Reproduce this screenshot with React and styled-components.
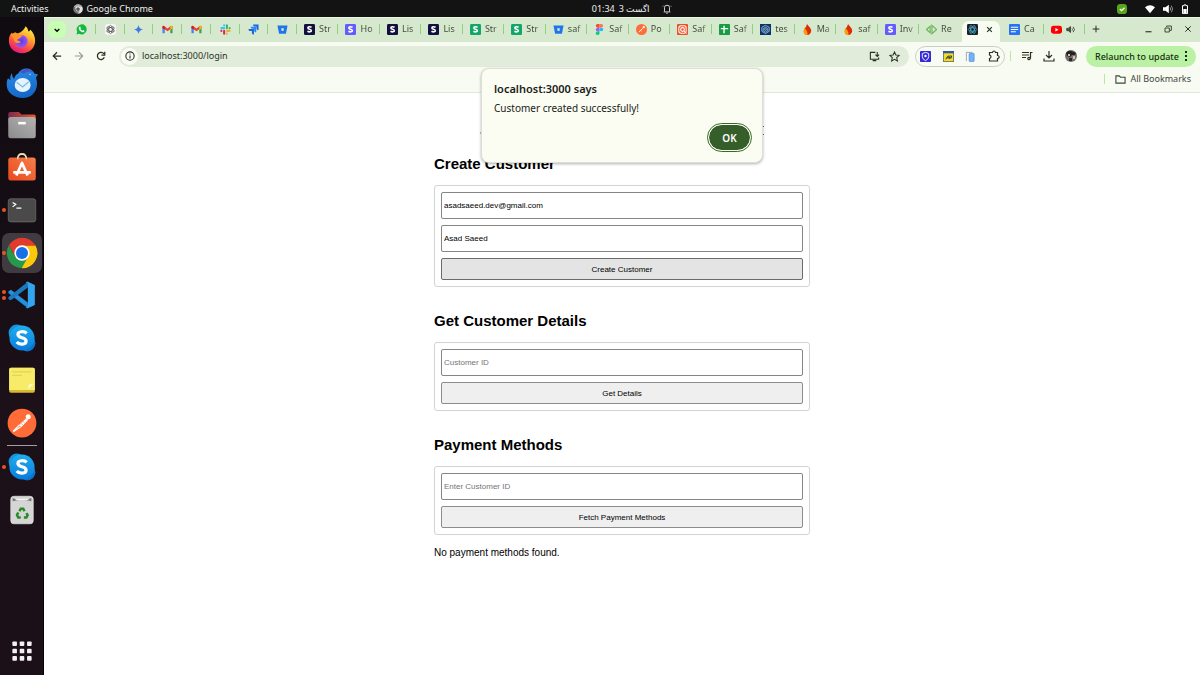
import React from "react";
import styled, { createGlobalStyle } from "styled-components";

const Global = createGlobalStyle`
  *, *::before, *::after { box-sizing: border-box; }
  html, body { margin: 0; height: 100%; }
  #root { height: 100%; }
  body { background: #fff; overflow: hidden; font-family: "Noto Sans", "Open Sans", sans-serif; }
  button, input { font-family: inherit; margin: 0; }
  svg { display: block; flex: none; }
`;

const Desktop = styled.div`
  display: flex;
  flex-direction: column;
  min-height: 100%;
`;

/* ---------- system bar ---------- */
const SystemBar = styled.header`
  display: grid;
  grid-template-columns: 1fr auto 1fr;
  align-items: center;
  height: 17px;
  padding: 0 11px;
  background: #131313;
  color: #f0f0f0;
  font-size: 9px;
  line-height: 17px;
`;
const BarGroup = styled.div`
  display: flex;
  align-items: center;
  justify-content: ${(p) => p.$justify || "flex-start"};
  gap: ${(p) => p.$gap}px;
`;
const ClockGroup = styled(BarGroup)`
  padding-left: 64px;
`;
const BarButton = styled.button`
  display: flex;
  align-items: center;
  gap: 4px;
  padding: 0;
  border: 0;
  background: none;
  color: inherit;
  font-size: 9px;
  line-height: 17px;
`;

const Workspace = styled.div`
  display: flex;
  flex: 1;
`;

/* ---------- dock ---------- */
const Dock = styled.nav`
  display: flex;
  flex-direction: column;
  align-items: center;
  width: 44px;
  flex: none;
  padding: 3px 0 4px;
  background: linear-gradient(#0f0b10, #1c1019 60%, #1b1017);
  border-right: 1px solid #050305;
`;
const Favourites = styled.div`
  display: flex;
  flex-direction: column;
  justify-content: space-between;
  height: 423px;
`;
const OpenItems = styled.div`
  display: flex;
  flex-direction: column;
  gap: 3px;
`;
const DockItem = styled.button`
  position: relative;
  display: flex;
  align-items: center;
  justify-content: center;
  width: 40px;
  height: 40px;
  padding: 0;
  border: 0;
  border-radius: 7px;
  background: ${(p) => (p.$active ? "#3f3b40" : "transparent")};
`;
const RunDots = styled.span`
  position: absolute;
  left: 0;
  top: 0;
  bottom: 0;
  display: flex;
  flex-direction: column;
  justify-content: center;
  gap: 2px;
  i { width: 4px; height: 4px; border-radius: 2px; background: #e95420; }
`;
const DockRule = styled.hr`
  width: 30px;
  height: 1px;
  margin: 2px 0 1px;
  border: 0;
  background: #a29ea2;
`;
const DockSpace = styled.div`flex: 1;`;

/* ---------- browser ---------- */
const Browser = styled.main`
  position: relative;
  display: flex;
  flex-direction: column;
  flex: 1;
  min-width: 0;
  background: #fff;
`;
const TabStrip = styled.div`
  display: flex;
  align-items: stretch;
  height: 25px;
  padding-left: 4px;
  background: #d6e8cd;
  border-top: 1px solid #e9f4e3;
`;
const TabSearch = styled.button`
  display: grid;
  place-items: center;
  width: 18px;
  height: 17px;
  margin: 3px 1px 0 0;
  padding: 0;
  border: 0;
  border-radius: 6px;
  background: #c8ffb4;
`;
const PinnedTabs = styled.div`
  display: flex;
  width: 230px;
  flex: none;
`;
const TitledTabs = styled.div`
  display: grid;
  grid-auto-flow: column;
  grid-auto-columns: minmax(0, 1fr);
  flex: 1;
  min-width: 0;
`;
const Tab = styled.button`
  position: relative;
  display: flex;
  flex: 1;
  align-items: center;
  justify-content: ${(p) => (p.$pinned ? "center" : "flex-start")};
  gap: 4px;
  min-width: 0;
  padding: ${(p) => (p.$pinned ? "0 0 2px" : "0 4px 2px 7px")};
  border: 0;
  background: none;
  color: #44503f;
  font-size: 9px;
  line-height: 12px;
  &::after {
    content: "";
    position: absolute;
    right: 0;
    top: 6px;
    height: 10px;
    width: 1px;
    background: ${(p) => (p.$noRule ? "transparent" : "#8bd47c")};
  }
`;
const ActiveTab = styled.div`
  display: flex;
  align-items: center;
  justify-content: space-between;
  min-width: 0;
  margin: 3px 2px 0 1px;
  padding: 0 7px 4px 5px;
  border-radius: 7px 7px 0 0;
  background: #f8fbf1;
`;
const TabTitle = styled.span`
  flex: 1;
  min-width: 0;
  overflow: hidden;
  white-space: nowrap;
  text-align: left;
  mask-image: linear-gradient(90deg, #000 60%, rgba(0, 0, 0, 0.2));
`;
const StripEnd = styled.div`
  display: flex;
  align-items: center;
  justify-content: space-between;
  width: 115px;
  flex: none;
  padding: 0 7px 2px 6px;
`;
const WindowButtons = styled.div`
  display: flex;
  gap: 10px;
`;
const IconButton = styled.button`
  display: grid;
  place-items: center;
  flex: none;
  width: ${(p) => p.$size || 10}px;
  height: ${(p) => p.$size || 10}px;
  padding: 0;
  border: 0;
  background: none;
  color: ${(p) => (p.$dim ? "#95a08f" : "#27331f")};
`;
const Toolbar = styled.div`
  display: flex;
  align-items: center;
  height: 28px;
  padding: 0 4px 0 8px;
  background: #f8fbf1;
`;
const NavButtons = styled.div`
  display: flex;
  gap: 12px;
  margin-right: 13px;
`;
const AddressBar = styled.label`
  display: flex;
  align-items: center;
  flex: 1;
  gap: 4px;
  height: 21px;
  padding: 0 9px 0 2px;
  border-radius: 11px;
  background: #e2ecdb;
  color: #27331f;
`;
const SiteInfo = styled.span`
  display: grid;
  place-items: center;
  width: 17px;
  height: 17px;
  border-radius: 9px;
  background: #fafdf6;
`;
const AddressInput = styled.input`
  flex: 1;
  min-width: 0;
  padding: 0;
  border: 0;
  outline: 0;
  background: none;
  color: #2a3327;
  font-size: 9px;
  line-height: 14px;
`;
const AddressActions = styled.span`
  display: flex;
  gap: 9px;
`;
const Extensions = styled.div`
  display: flex;
  align-items: center;
  justify-content: space-between;
  width: 90px;
  height: 21px;
  margin: 0 5px 0 6px;
  padding: 0 4px;
  border: 1px solid #c9cec4;
  border-radius: 11px;
  color: #27331f;
`;
const Rule = styled.span`
  width: 1px;
  height: 10px;
  background: #b4e8a3;
`;
const ToolGroup = styled.div`
  display: flex;
  gap: 10px;
  margin: 0 9px 0 10px;
`;
const Relaunch = styled.button`
  display: flex;
  align-items: center;
  justify-content: space-between;
  width: 110px;
  height: 21px;
  padding: 0 9px;
  border: 0;
  border-radius: 11px;
  background: #baf1a5;
  color: #15300c;
  font-size: 9px;
  font-weight: 500;
  white-space: nowrap;
`;
const Bookmarks = styled.div`
  display: flex;
  align-items: center;
  justify-content: flex-end;
  gap: 10px;
  height: 23px;
  padding: 0 9px 4px 0;
  background: #f8fbf1;
  border-bottom: 1px solid #e2e6dd;
`;
const BookmarkButton = styled.button`
  display: flex;
  align-items: center;
  gap: 4px;
  padding: 0;
  border: 0;
  background: none;
  color: #3c463a;
  font-size: 9px;
  line-height: 14px;
`;

/* ---------- page ---------- */
const Page = styled.div`
  display: flex;
  flex-direction: column;
  width: 100%;
  max-width: 376px;
  margin: 0 auto;
  padding-top: 33px;
  color: #000;
  font-family: "Liberation Sans", Arial, sans-serif;
  font-size: 10px;
`;
const Banner = styled.svg`
  align-self: center;
  margin-bottom: 18px;
`;
const Heading = styled.h2`
  margin: 0 0 11px;
  font-size: 15px;
  line-height: 20px;
`;
const Form = styled.form`
  display: flex;
  flex-direction: column;
  gap: 6px;
  margin-bottom: ${(p) => (p.$last ? 12 : 24)}px;
  padding: 6px;
  border: 1px solid #d3d3d3;
  border-radius: 3px;
`;
const Field = styled.input`
  width: 100%;
  height: 27px;
  padding: 0 2px;
  border: 1px solid #858585;
  border-radius: 2px;
  background: #fff;
  color: #000;
  font-size: 8px;
  &::placeholder { color: #757575; opacity: 1; }
`;
const Submit = styled.button`
  height: 22px;
  padding: 0;
  border: 1px solid ${(p) => (p.$hovered ? "#6b6b6b" : "#8c8c8c")};
  border-radius: 2px;
  background: ${(p) => (p.$hovered ? "#e4e4e4" : "#efefef")};
  color: #000;
  font-size: 8px;
`;
const Message = styled.p`
  margin: 0;
  font-size: 10px;
  line-height: 12px;
`;

/* ---------- alert ---------- */
const Alert = styled.section`
  position: absolute;
  top: 51px;
  left: 50%;
  display: flex;
  flex-direction: column;
  width: 282px;
  height: 95px;
  margin-left: -141px;
  padding: 12px 11px 11px 12px;
  border: 1px solid #dcdfd7;
  border-radius: 8px;
  background: #fbfdf3;
  box-shadow: 0 1px 3px rgba(0, 0, 0, 0.3);
  color: #1a1c18;
`;
const AlertTitle = styled.h1`
  margin: 0 0 5px;
  font-size: 11px;
  font-weight: 600;
  line-height: 15px;
`;
const AlertText = styled.p`
  margin: 0;
  font-size: 10px;
  line-height: 15px;
`;
const OkButton = styled.button`
  align-self: flex-end;
  width: 43px;
  height: 27px;
  margin: auto 0 0;
  padding: 0;
  border: 1px solid #fbfdf3;
  border-radius: 14px;
  outline: 1px solid #386a20;
  background: #355e2b;
  background-clip: padding-box;
  color: #fff;
  font-size: 10px;
  font-weight: 600;
`;

/* ---------- line icons ---------- */
const Line = ({ d, size = 10, w = 1.3, children }) => (
  <svg width={size} height={size} viewBox="0 0 12 12" fill="none" stroke="currentColor" strokeWidth={w}>
    {d && <path d={d} />}
    {children}
  </svg>
);

/* ---------- favicons ---------- */
const Fav = ({ children }) => (
  <svg width="11" height="11" viewBox="0 0 24 24">{children}</svg>
);
const StripeIcon = ({ color }) => (
  <Fav>
    <rect width="24" height="24" rx="3" fill={color} />
    <path d="M16.500 7c-3-1.500-8-1.500-8 1.500 0 3.500 7.500 2.500 7.500 6 0 3-5 3.200-8.500 1.500" fill="none" stroke="#fff" strokeWidth="3.600" />
  </Fav>
);
const favicons = {
  whatsapp: <Fav><path d="M1 23l1.700-6A11 11 0 1 1 7 21.300z" fill="#12b93d" /><path d="M7 6l2-.5 1.700 3.500-1.200 1.700c1 2 2.300 3 4.200 3.800l1.500-1.500 3.300 1.700c0 3-3 4-5.500 3C9 16 6.500 13 6 10c-.2-1.500 0-3 1-4z" fill="#fff" /></Fav>,
  gpt: <Fav><rect width="24" height="24" rx="5" fill="#f5f5f5" /><g fill="none" stroke="#555" strokeWidth="1.700"><ellipse cx="12" cy="12" rx="4" ry="9" /><ellipse cx="12" cy="12" rx="4" ry="9" transform="rotate(60 12 12)" /><ellipse cx="12" cy="12" rx="4" ry="9" transform="rotate(120 12 12)" /></g></Fav>,
  gemini: <Fav><path d="M12 2c1 6 4 9 10 10-6 1-9 4-10 10-1-6-4-9-10-10 6-1 9-4 10-10z" fill="#3c7be0" /></Fav>,
  gmail: <Fav><path d="M1 6v14h5V11z" fill="#4285f4" /><path d="M23 6v14h-5V11z" fill="#34a853" /><path d="M1 8V5l3-1 8 6 8-6 3 1v3l-11 8z" fill="#ea4335" /><path d="M18 6l3-2 2 2v3l-5 4z" fill="#fbbc04" /><path d="M1 6l2-2 3 2v6L1 9z" fill="#c5221f" /></Fav>,
  slack: <Fav><g strokeWidth="4.400" strokeLinecap="round"><path d="M3 9h6" stroke="#36c5f0" /><path d="M9 3v0" stroke="#36c5f0" /><path d="M15 3v6" stroke="#2eb67d" /><path d="M21 9v0" stroke="#2eb67d" /><path d="M15 15h6" stroke="#ecb22e" /><path d="M15 21v0" stroke="#ecb22e" /><path d="M9 15v6" stroke="#e01e5a" /><path d="M3 15v0" stroke="#e01e5a" /></g></Fav>,
  jira: <Fav><path d="M11 1h12v12c-3 0-4.500-2-4.500-4V5.500H15c-2.500 0-4-2-4-4.500z" fill="#1868db" /><path d="M6 6h12v12c-3 0-4.500-2-4.500-4v-3.500H10C7.500 10.500 6 8.500 6 6z" fill="#2684ff" /><path d="M1 11h12v12c-3 0-4.500-2-4.500-4v-3.500H5c-2.500 0-4-2-4-4.500z" fill="#1868db" /></Fav>,
  bitbucket: <Fav><path d="M1 3h22l-3.500 18h-15zM9 9l1.200 6h4L15 9z" fill="#1f75ee" fillRule="evenodd" /></Fav>,
  navy: <StripeIcon color="#11103f" />,
  violet: <StripeIcon color="#635bff" />,
  green: <StripeIcon color="#12a66a" />,
  figma: <Fav><path d="M12 0H8a4 4 0 0 0 0 8h4z" fill="#f24e1e" /><path d="M12 0h4a4 4 0 0 1 0 8h-4z" fill="#ff7262" /><path d="M12 8H8a4 4 0 0 0 0 8h4z" fill="#a259ff" /><circle cx="16" cy="12" r="4" fill="#1abcfe" /><path d="M12 16H8a4 4 0 1 0 4 4z" fill="#0acf83" /></Fav>,
  postman: <Fav><circle cx="12" cy="12" r="12" fill="#ff6c37" /><path d="M6 18l9-9M9 13l3 3" stroke="#fff" strokeWidth="2" /><circle cx="17" cy="7" r="2.500" fill="#fff" /></Fav>,
  camera: <Fav><rect width="24" height="24" rx="2" fill="#ee5026" /><rect x="4" y="4" width="16" height="16" rx="5" fill="none" stroke="#fff" strokeWidth="2.200" /><circle cx="12" cy="12" r="4" fill="none" stroke="#fff" strokeWidth="2.500" /><path d="M15 15l6 6" stroke="#fff" strokeWidth="2" /></Fav>,
  sheets: <Fav><rect width="24" height="24" rx="2" fill="#179b45" /><path d="M4 10h16M11 4v16" stroke="#fff" strokeWidth="3" /></Fav>,
  swirl: <Fav><rect width="24" height="24" fill="#0b3569" /><g fill="none" stroke="#a8c7e6" strokeWidth="1.700"><path d="M12 3l8 4v9l-8 5-8-5V7z" /><path d="M12 7l5 3v5l-5 3-5-3v-5z" /><circle cx="12" cy="12" r="2" /></g></Fav>,
  flame: <Fav><path d="M11 0c2 5 10 8 9 16-1 5-4 8-8 8-5 0-9-4-8-10 .6-4 5-6 7-14z" fill="#dd2c00" /><path d="M6 8c2 5 7 7 6 16-5 0-9-4-8-10 .2-2 1-4 2-6z" fill="#ffa000" /></Fav>,
  code: <Fav><g fill="none" stroke="#6fb65e" strokeWidth="2.600"><path d="M9 5l-8 7 8 7z" /><path d="M13 3l10 9-10 9z" /></g></Fav>,
  react: <Fav><rect width="24" height="24" rx="3" fill="#1b1f27" /><g fill="none" stroke="#4aa9c6" strokeWidth="1.700"><ellipse cx="12" cy="12" rx="9.500" ry="3.800" /><ellipse cx="12" cy="12" rx="9.500" ry="3.800" transform="rotate(60 12 12)" /><ellipse cx="12" cy="12" rx="9.500" ry="3.800" transform="rotate(120 12 12)" /></g></Fav>,
  docs: <Fav><rect width="24" height="24" rx="2" fill="#2874f0" /><path d="M4 7h16M4 12h16M4 17h11" stroke="#fff" strokeWidth="2.500" /></Fav>,
  youtube: <Fav><rect y="4" width="24" height="17" rx="5" fill="#f00" /><path d="M9.500 8.500v8l7-4z" fill="#fff" /></Fav>,
};
const sound = (
  <Line size={9}><path d="M1 4.500v3h2L6 10V2L3 4.500z" fill="currentColor" /><path d="M8 4.500q1.500 1.500 0 3M9.500 2.500q3.500 3.500 0 7" /></Line>
);

const pinned = ["whatsapp", "gpt", "gemini", "gmail", "gmail", "slack", "jira", "bitbucket"];
const tabs = [
  ["navy", "Str"], ["violet", "Ho"], ["navy", "Lis"], ["navy", "Lis"], ["green", "Str"],
  ["green", "Str"], ["bitbucket", "saf"], ["figma", "Saf"], ["postman", "Po"], ["camera", "Saf"],
  ["sheets", "Saf"], ["swirl", "tes"], ["flame", "Ma"], ["flame", "saf"], ["violet", "Inv"], ["code", "Re"],
];

/* ---------- dock icons ---------- */
const Big = ({ children, size = 30 }) => (
  <svg width={size} height={size} viewBox="0 0 48 48">{children}</svg>
);
const Firefox = () => (
  <Big>
    <defs>
      <linearGradient id="fx" x1="0.800" y1="0" x2="0.300" y2="1"><stop offset="0" stopColor="#fff44f" /><stop offset=".35" stopColor="#ffb02b" /><stop offset=".7" stopColor="#ff4f3f" /><stop offset="1" stopColor="#e31587" /></linearGradient>
      <radialGradient id="fxg"><stop offset="0" stopColor="#6a35d9" /><stop offset="1" stopColor="#9059ff" /></radialGradient>
    </defs>
    <path d="M30 2c3 3 4 6 4 8 2 0 3-1 3-3 5 4 8 11 8 18 0 12-9 20-21 20S3 37 3 25c0-6 2-10 5-13v4l5-5c1 2 3 2 5 2 5-1 9-5 12-11z" fill="url(#fx)" />
    <circle cx="23" cy="26" r="10" fill="url(#fxg)" />
    <path d="M7 14c5-2 10 0 12 2 3-1 5 0 6 2-2 0-3 1-4 3-2 0-4 1-5 3 2 2 4 1 6 3-4 4-11 1-11-4-2-3-4-5-4-9z" fill="#ff9526" />
  </Big>
);
const Thunderbird = () => (
  <Big size={32}>
    <defs><linearGradient id="tb" x1="0.300" y1="0" x2="0.600" y2="1"><stop offset="0" stopColor="#2a8de8" /><stop offset="1" stopColor="#1464c4" /></linearGradient></defs>
    <path d="M9 9c-3 4-3 8-2 11l-4-3c-3 6-3 16 3 22 9 9 25 10 33 3 8-7 9-17 6-26l3-5-5-1C38-1 23 0 18 10c-3 1-5 4-6 8-2-2-3-5-3-9z" fill="url(#tb)" />
    <path d="M21 8c5-6 15-7 20 0-5-2-9-1-12 1-3 1-5 1-8-1z" fill="#4b52c4" />
    <ellipse cx="25" cy="27" rx="12" ry="10.500" fill="#e6f4ff" />
    <path d="M16 23l9 7 9-8" fill="none" stroke="#7db9ef" strokeWidth="2" />
    <circle cx="36" cy="11" r="1" fill="#fff" />
  </Big>
);
const Files = () => (
  <Big>
    <defs><linearGradient id="fi" x1="0" x2="1"><stop offset="0" stopColor="#7b2a4c" /><stop offset="1" stopColor="#e95a2a" /></linearGradient><linearGradient id="fg" x1="0" y1="1" x2="1" y2="0"><stop offset="0" stopColor="#8b8b8b" /><stop offset="1" stopColor="#b3b3b3" /></linearGradient></defs>
    <path d="M2 6q0-3 3-3h14l4 4h20q3 0 3 3v12H2z" fill="url(#fi)" />
    <rect x="2" y="11" width="44" height="34" rx="4" fill="url(#fg)" />
    <path d="M18 21h12" stroke="#fff" strokeWidth="4" />
  </Big>
);
const Software = () => (
  <Big>
    <defs><linearGradient id="sw" x1="0" y1="1" x2="1" y2="0"><stop offset="0" stopColor="#e8481c" /><stop offset="1" stopColor="#f77f4b" /></linearGradient></defs>
    <path d="M17 11q0-10 7-10t7 10" fill="none" stroke="#dcc9a0" strokeWidth="2.500" />
    <rect x="2" y="7" width="44" height="37" rx="4" fill="url(#sw)" />
    <path d="M17 10q0-8 7-8t7 8" fill="none" stroke="#eadfbf" strokeWidth="2" />
    <path d="M15 36l9-20 9 20M10 31h28" fill="none" stroke="#fff" strokeWidth="4.500" strokeLinejoin="round" />
  </Big>
);
const Terminal = () => (
  <Big>
    <rect x="2" y="6" width="44" height="37" rx="4" fill="#4a4a4a" stroke="#777" />
    <path d="M9 12l5 3-5 4M15 21h8" fill="none" stroke="#fff" strokeWidth="2" />
  </Big>
);
const Chrome = ({ size = 32, mono }) => {
  const [r, y, g, b] = mono ? ["#aaa", "#ddd", "#777", "#555"] : ["#e23b2e", "#fdc70c", "#28984a", "#1a6fe8"];
  return (
    <Big size={size}>
      <path d="M24 24L4.400 12.500A23 23 0 0 1 43.600 12z" fill={r} />
      <path d="M24 24V12.500h20A23 23 0 0 1 24 47z" fill={y} />
      <path d="M24 24l9 6-9.500 17A23 23 0 0 1 4.300 12.500L14 30z" fill={g} />
      <path d="M24 13h20a23 23 0 0 0-39.500-.5L14 29z" fill={r} />
      <circle cx="24" cy="24" r="11.500" fill="#fff" />
      <circle cx="24" cy="24" r="9" fill={b} />
    </Big>
  );
};
const Code = () => (
  <Big size={28}>
    <path d="M33 2L8 29l-5 4-2-3v-2L33 2z" fill="#1b7bc4" />
    <path d="M33 46L8 19l-4-3-3 2v3l32 25z" fill="#1b83cf" />
    <path d="M33 1l13 6v34l-13 6-2-1 3-8V11l-3-9z" fill="#32a5ee" />
    <path d="M5 15l29 22v9L1 20v-2z" fill="#2490dc" />
    <path d="M5 33l29-22V2L1 28v2z" fill="#1c78bd" />
  </Big>
);
const Skype = () => (
  <Big size={28}>
    <defs><linearGradient id="sk" x1="0" y1="0" x2="0" y2="1"><stop offset="0" stopColor="#20aef0" /><stop offset="1" stopColor="#087ddb" /></linearGradient></defs>
    <circle cx="15" cy="15" r="14" fill="#1793dc" /><circle cx="33" cy="33" r="14" fill="#0c74cc" />
    <circle cx="24" cy="24" r="21.500" fill="url(#sk)" />
    <path d="M32 16c-4-4-15-4-15 2 0 7 14 4 14 11 0 7-12 7-16 2" fill="none" stroke="#fff" strokeWidth="5.500" />
  </Big>
);
const Notes = () => (
  <Big size={28}>
    <rect x="2" y="3" width="44" height="43" rx="3" fill="#d9b92d" />
    <path d="M2 6q0-3 3-3h38q3 0 3 3v35H2z" fill="#f7ec6a" />
    <path d="M7 10h33M7 16h17" stroke="#e5d44e" strokeWidth="2" /><path d="M34 40l2-8 8-2z" fill="#fffbd0" />
  </Big>
);
const Postman = () => (
  <Big>
    <circle cx="24" cy="24" r="23" fill="#ff6c37" />
    <circle cx="34" cy="14" r="4" fill="#fff" />
    <path d="M31 17L20 27l3 3 10-11z" fill="#fff" stroke="#fff" strokeWidth="1.500" />
    <path d="M20 27L10 37M22 30L10 38" stroke="#fff" strokeWidth="2" />
    <path d="M25 21l4 4M22 24l4 4" stroke="#ff6c37" />
  </Big>
);
const Trash = () => (
  <Big>
    <rect x="6" y="2" width="36" height="44" rx="5" fill="#d5d5d5" stroke="#eee" />
    <path d="M9 5h30v5q-15-5-30 0z" fill="#777" /><path d="M11 5h26l-4 3H15z" fill="#f5f5f5" />
    <g fill="none" stroke="#268c24" strokeWidth="4"><path d="M20 26l2-4h4l2 4" /><path d="M31 29l2 3-2 4h-4" /><path d="M22 36h-4l-2-4 2-4" /></g>
  </Big>
);
const Grid = () => (
  <Big size={22}>
    {[3, 19, 35].map((y) => [3, 19, 35].map((x) => <rect key={x + "-" + y} x={x} y={y} width="10" height="10" rx="2" fill="#f2f0f2" />))}
  </Big>
);

const dock = [
  ["Firefox", Firefox, 0], ["Thunderbird", Thunderbird, 0], ["Files", Files, 0], ["Software", Software, 0],
  ["Terminal", Terminal, 1], ["Chrome", Chrome, 1, true], ["Code", Code, 2], ["Skype", Skype, 0],
  ["Notes", Notes, 0], ["Postman", Postman, 0],
];

const DockEntry = ({ name, Icon, dots = 0, active }) => (
  <DockItem type="button" aria-label={name} $active={active}>
    {dots > 0 && <RunDots>{Array.from({ length: dots }, (_, i) => <i key={i} />)}</RunDots>}
    <Icon />
  </DockItem>
);

export default function App() {
  return (
    <Desktop>
      <Global />
      <SystemBar>
        <BarGroup $gap={24}>
          <BarButton type="button">Activities</BarButton>
          <BarButton type="button"><Chrome size={10} mono />Google Chrome</BarButton>
        </BarGroup>
        <ClockGroup $gap={12}>
          <BarButton type="button"><span>01:34</span><span>3 اگست</span></BarButton>
          <Line size={10} w={1}><path d="M2 9.500h8M3 9V4q0-2.500 3-2.500T9 4v5M5 11h2M1 3l1-1M11 3l-1-1" /></Line>
        </ClockGroup>
        <BarGroup $gap={8} $justify="flex-end">
          <BarGroup $gap={18}>
            <svg width="10" height="10" viewBox="0 0 12 12"><rect width="12" height="12" rx="4" fill="#5aa51a" /><path d="M3.500 6l2 2 3.500-3.500" fill="none" stroke="#fff" strokeWidth="1.500" /></svg>
            <svg width="10" height="10" viewBox="0 0 12 12"><path d="M0 4q6-5 12 0L6 11z" fill="#fff" /></svg>
          </BarGroup>
          <svg width="10" height="10" viewBox="0 0 12 12"><path d="M0 4h3l4-3v10L3 8H0z" fill="#fff" /><path d="M8.500 4q1.500 2 0 4M10 2q3 4 0 8" fill="none" stroke="#aaa" /></svg>
          <svg width="8" height="10" viewBox="0 0 8 12"><path d="M1 2h2V1h2v1h2v9.500H1z" fill="none" stroke="#fff" strokeWidth="1.200" /><path d="M2 6h4v5H2z" fill="#fff" /></svg>
        </BarGroup>
      </SystemBar>
      <Workspace>
        <Dock>
          <Favourites>
            {dock.map(([name, Icon, dots, active]) => (
              <DockEntry key={name} name={name} Icon={Icon} dots={dots} active={active} />
            ))}
          </Favourites>
          <DockRule />
          <OpenItems>
            <DockEntry name="Skype window" Icon={Skype} dots={1} />
            <DockEntry name="Trash" Icon={Trash} />
          </OpenItems>
          <DockSpace />
          <DockEntry name="Show applications" Icon={Grid} />
        </Dock>
        <Browser>
          <TabStrip>
            <TabSearch type="button" aria-label="Search tabs"><Line size={8} w={2} d="M2.500 4.500L6 8l3.500-3.500" /></TabSearch>
            <PinnedTabs>
              {pinned.map((k, i) => <Tab key={i} type="button" aria-label={k} $pinned>{favicons[k]}</Tab>)}
            </PinnedTabs>
            <TitledTabs>
              {tabs.map(([k, t], i) => (
                <Tab key={i} type="button" $noRule={i === tabs.length - 1}>{favicons[k]}<TabTitle>{t}</TabTitle></Tab>
              ))}
              <ActiveTab>{favicons.react}<IconButton type="button" aria-label="Close tab" $size={7}><Line size={7} w={2} d="M2 2l8 8M10 2l-8 8" /></IconButton></ActiveTab>
              <Tab type="button">{favicons.docs}<TabTitle>Ca</TabTitle></Tab>
              <Tab type="button" aria-label="YouTube">{favicons.youtube}{sound}</Tab>
            </TitledTabs>
            <StripEnd>
              <IconButton type="button" aria-label="New tab" $size={9}><Line size={8} w={1.5} d="M6 1v10M1 6h10" /></IconButton>
              <WindowButtons>
                <IconButton type="button" aria-label="Minimize"><Line size={9} w={1.5} d="M2 9h8" /></IconButton>
                <IconButton type="button" aria-label="Restore"><Line size={8} w={1.3} d="M4 3V1.500h7V8H9M1.500 4.500H8V10.500H1.500z" /></IconButton>
                <IconButton type="button" aria-label="Close"><Line size={8} w={1.5} d="M2 2l8 8M10 2l-8 8" /></IconButton>
              </WindowButtons>
            </StripEnd>
          </TabStrip>
          <Toolbar>
            <NavButtons>
              <IconButton type="button" aria-label="Back"><Line size={10} w={1.5} d="M11 6H2M6 1.500L1.500 6 6 10.500" /></IconButton>
              <IconButton type="button" aria-label="Forward" $dim><Line size={10} w={1.3} d="M1 6h9M6 1.500L10.500 6 6 10.500" /></IconButton>
              <IconButton type="button" aria-label="Reload"><Line size={10} w={1.5} d="M10 7.500A4.300 4.300 0 1 1 9.500 3.500M10.500 1v4h-4" /></IconButton>
            </NavButtons>
            <AddressBar>
              <SiteInfo><Line size={10} w={1.3}><circle cx="6" cy="6" r="5" /><path d="M6 5.500V9M6 3v1.200" /></Line></SiteInfo>
              <AddressInput aria-label="Address" defaultValue="localhost:3000/login" />
              <AddressActions>
                <Line size={11} w={1.2}><path d="M7 1.500H1.500V9h9V7M4 10.500h4M9 1v4.500M7 4l2 2 2-2" /></Line>
                <Line size={11} w={1.1}><path d="M6 1l1.500 3.300 3.700.4-2.800 2.400.8 3.700L6 9l-3.200 1.800.8-3.700L.8 4.700l3.700-.4z" /></Line>
              </AddressActions>
            </AddressBar>
            <Extensions>
              <svg width="11" height="11" viewBox="0 0 12 12"><rect width="12" height="12" rx="1" fill="#3329d6" /><path d="M6 1.500l3.500 1.300V6Q9.500 9 6 10.500 2.500 9 2.500 6V2.800z" fill="none" stroke="#fff" /><circle cx="6" cy="5.500" r="1.300" fill="#fff" /></svg>
              <svg width="11" height="11" viewBox="0 0 12 12"><rect x=".5" y=".5" width="11" height="11" fill="#f2dc20" stroke="#6f7c57" /><path d="M0 0h12v2.500H0z" fill="#2c58a8" /><path d="M3 9l2.500-3.500h1L7 8.500M7 5.500h2.500L8.500 8M4 7.500h5" fill="none" stroke="#25314d" /></svg>
              <svg width="11" height="11" viewBox="0 0 12 12"><path d="M1.500 11V1.500H8" fill="none" stroke="#9aa3ae" /><rect x="4.500" y="2.500" width="5.500" height="9" rx="1" fill="#74b1fa" stroke="#397fd4" strokeWidth=".6" /></svg>
              <Line size={12} w={1.2}><path d="M1.500 2.500h3q.2-1.500 1.500-1.500t1.500 1.500H9.500V5.500q1.700.2 1.700 1.500T9.500 8.500v2.500h-8V8.500q1.500-.3 1.500-1.700T1.500 5z" /></Line>
            </Extensions>
            <Rule />
            <ToolGroup>
              <IconButton type="button" aria-label="Media" $size={12}><Line size={12} w={1.2} d="M1 2.500h7M1 5h7M1 7.500h4M9.500 8.500V2.500h2"><circle cx="8" cy="8.500" r="1.200" /></Line></IconButton>
              <IconButton type="button" aria-label="Downloads" $size={12}><Line size={12} w={1.2} d="M6 1v6.500M3 5l3 3 3-3M1 8.500V11h10V8.500" /></IconButton>
              <IconButton type="button" aria-label="Profile" $size={12}>
                <svg width="12" height="12" viewBox="0 0 12 12"><circle cx="6" cy="6" r="6" fill="#77706c" /><path d="M1 3q2-3 5-2t5 2L10 5H7L5 7 2 6z" fill="#242225" /><path d="M3 4h2v2H3zM8 6h2v3H8z" fill="#ccc6bf" /><path d="M4 8h3v3H4z" fill="#2e2827" /></svg>
              </IconButton>
            </ToolGroup>
            <Relaunch type="button">Relaunch to update<svg width="2" height="10" viewBox="0 0 2 10" fill="#15300c"><rect width="2" height="2" /><rect y="4" width="2" height="2" /><rect y="8" width="2" height="2" /></svg></Relaunch>
          </Toolbar>
          <Bookmarks>
            <Rule />
            <BookmarkButton type="button"><Line size={11} w={1.2} d="M1 2h3.500L6 3.500h5V10H1z" />All Bookmarks</BookmarkButton>
          </Bookmarks>
          <Page>
            <Banner width="284" height="10" viewBox="0 0 284 10" aria-hidden="true">
              <path d="M0 6h2v2H0z" fill="#cdb8a4" />
              <path d="M281 0h3v1h-3zM281 8h3v1h-3z" fill="#48769f" />
            </Banner>
            <Heading>Create Customer</Heading>
            <Form>
              <Field aria-label="Email" type="email" defaultValue="asadsaeed.dev@gmail.com" />
              <Field aria-label="Name" defaultValue="Asad Saeed" />
              <Submit type="button" $hovered>Create Customer</Submit>
            </Form>
            <Heading>Get Customer Details</Heading>
            <Form>
              <Field aria-label="Customer ID" placeholder="Customer ID" />
              <Submit type="button">Get Details</Submit>
            </Form>
            <Heading>Payment Methods</Heading>
            <Form $last>
              <Field aria-label="Enter Customer ID" placeholder="Enter Customer ID" />
              <Submit type="button">Fetch Payment Methods</Submit>
            </Form>
            <Message>No payment methods found.</Message>
          </Page>
          <Alert role="alertdialog" aria-label="localhost:3000 says">
            <AlertTitle>localhost:3000 says</AlertTitle>
            <AlertText>Customer created successfully!</AlertText>
            <OkButton type="button">OK</OkButton>
          </Alert>
        </Browser>
      </Workspace>
    </Desktop>
  );
}
